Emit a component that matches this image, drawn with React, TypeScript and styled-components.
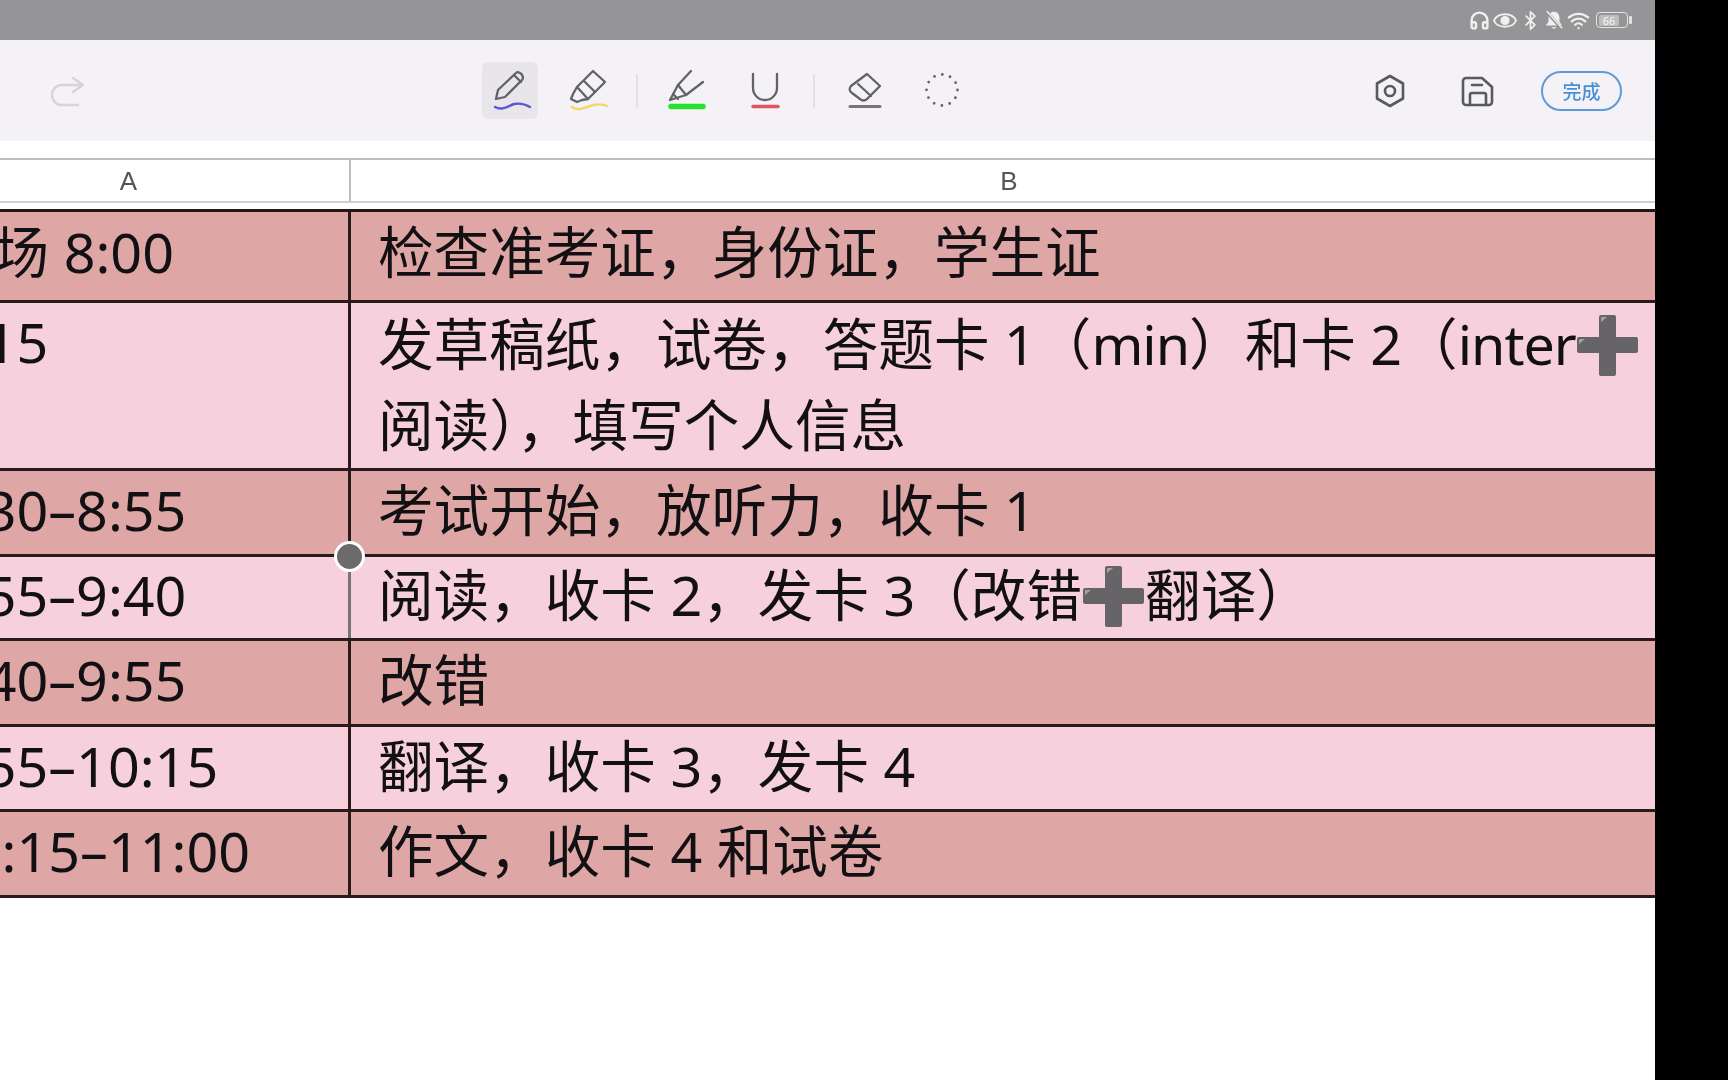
import React from 'react';
import styled, { createGlobalStyle } from 'styled-components';
import { Bluetooth, Headphones, Wifi } from 'lucide-react';

const GlobalStyle = createGlobalStyle`
  html, body {
    margin: 0;
    padding: 0;
    background: #000;
  }
  body {
    font-family: "Noto Sans", "Noto Sans CJK SC", sans-serif;
  }
`;

const PlusEmoji = () => (
  <PlusSvg viewBox="0 0 63 63">
    <path d="M25 1h13a2 2 0 0 1 2 2v20h20a2 2 0 0 1 2 2v12a2 2 0 0 1-2 2H40v21a2 2 0 0 1-2 2H25a2 2 0 0 1-2-2V39H3a2 2 0 0 1-2-2V25a2 2 0 0 1 2-2h20V3a2 2 0 0 1 2-2z" fill="#666466" />
    <path d="M25 8V4a1 1 0 0 1 1-1h5zM3 30v-4a1 1 0 0 1 1-1h5z" fill="#a5a3a5" />
  </PlusSvg>
);

const App = () => {
  const rows = [
    { time: '进场 8:00', text: <>检查准考证，身份证，学生证</> },
    {
      time: '8:15',
      text: (
        <>
          发草稿纸，试卷，答题卡 1（<Latin>min</Latin>）和卡 2（<Latin>inter</Latin><PlusEmoji />
          <br />
          阅读），填写个人信息
        </>
      ),
    },
    { time: '8:30–8:55', text: <>考试开始，放听力，收卡 1</> },
    { time: '8:55–9:40', text: <>阅读，收卡 2，发卡 3（改错<PlusEmoji />翻译）</> },
    { time: '9:40–9:55', text: <>改错</> },
    { time: '9:55–10:15', text: <>翻译，收卡 3，发卡 4</> },
    { time: '10:15–11:00', text: <>作文，收卡 4 和试卷</> },
  ];

  return (
    <Page>
      <GlobalStyle />
      <Screen>
        <StatusBar>
          <Headphones size={21} strokeWidth={2.8} />
          <EyeIcon viewBox="0 0 26 18">
            <path d="M1 9c4-9 20-9 24 0-4 9-20 9-24 0z" fill="none" stroke="#f1f0f1" strokeWidth="2" />
            <circle cx="13" cy="9" r="5" fill="#f1f0f1" />
          </EyeIcon>
          <Bluetooth size={21} strokeWidth={2} />
          <BellIcon viewBox="0 0 22 22">
            <path d="M11 2c-4 0-6 3-6 7v4l-3 4h18l-3-4V9c0-4-2-7-6-7zM8 19h6l-3 2z" fill="#f1f0f1" />
            <path d="M3 2l16 18" stroke="#949395" strokeWidth="3.5" />
            <path d="M3 1l17 19" stroke="#f1f0f1" strokeWidth="1.6" />
          </BellIcon>
          <Wifi size={23} strokeWidth={2.4} />
          <Battery>
            <BatteryLevel>66</BatteryLevel>
          </Battery>
        </StatusBar>

        <Toolbar>
          <RedoButton viewBox="0 0 36 36">
            <path d="M24 5l10 7-10 7M34 12H12C7 12 3 17 3 22s4 10 9 10h17" />
          </RedoButton>

          <Tools>
            <ToolButton $active>
              <ToolSvg viewBox="0 0 56 56">
                <path d="M14 37l2-9L34 11c3-3 9 3 6 7L23 35z" />
                <path d="M32 13l7 7" />
                <Stroke d="M13 45c7 4 13-1 19-3 6-1 11 0 16 3" stroke="#5a56d6" />
              </ToolSvg>
            </ToolButton>
            <ToolButton>
              <ToolSvg viewBox="0 0 56 56">
                <path d="M33 9l12 11-17 17-11-12z" />
                <path d="M24 19l11 11" />
                <path d="M17 25l-4 7-2 5 6 3 5-2 6-1" />
                <Stroke d="M12 45c7 5 14 0 21-2 5-1 10-1 14 1" stroke="#f2d868" />
              </ToolSvg>
            </ToolButton>
            <Separator />
            <ToolButton>
              <ToolSvg viewBox="0 0 56 56">
                <path d="M32 9L19 23l-8 15 16-5 17-13" />
                <path d="M19 23l8 10M14 32l5 5" />
                <Stroke d="M12 44.500h32" stroke="#28e02e" $width={5.5} />
              </ToolSvg>
            </ToolButton>
            <ToolButton>
              <ToolSvg viewBox="0 0 56 56">
                <path d="M16 12v14a12 12 0 0 0 24 0V12" />
                <Stroke d="M16 44.500h25" stroke="#e2545e" $width={3.5} />
              </ToolSvg>
            </ToolButton>
            <Separator />
            <ToolButton>
              <ToolSvg viewBox="0 0 56 56">
                <path d="M31 12l13 12-13 13c-2 2-5 2-7 0l-8-6c-3-2-3-5-1-7z" />
                <path d="M22 22l13 12" />
                <Stroke d="M14 44.500h30" stroke="#777579" $width={3} />
              </ToolSvg>
            </ToolButton>
            <ToolButton>
              <ToolSvg viewBox="0 0 56 56">
                <DottedCircle cx="28" cy="28" r="15.500" />
              </ToolSvg>
            </ToolButton>
          </Tools>

          <Actions>
            <IconButton viewBox="0 0 44 44">
              <path d="M22 7l13 7.500v15L22 37 9 29.500v-15z" />
              <circle cx="22" cy="22" r="5" />
            </IconButton>
            <IconButton viewBox="0 0 44 44">
              <path d="M10 9h16l10 9v15a3 3 0 0 1-3 3H10a3 3 0 0 1-3-3V12a3 3 0 0 1 3-3z" />
              <path d="M16 16h10M14 36V26a2 2 0 0 1 2-2h12a2 2 0 0 1 2 2v10" />
            </IconButton>
            <DoneButton>完成</DoneButton>
          </Actions>
        </Toolbar>

        <Sheet>
          <ColumnHeader>
            <HeaderCell>A</HeaderCell>
            <HeaderCell>B</HeaderCell>
          </ColumnHeader>

          <Table>
            {rows.map((row, i) => (
              <Row key={row.time} $dark={i % 2 === 0}>
                <TimeCell $lift={i === 0 ? 8 : i === 1 ? 0 : 5} $top={i === 1} $selected={i === 3}>
                  {row.time}
                  {i === 3 && <Handle />}
                </TimeCell>
                <TextCell $lift={i === 0 ? 8 : i === 1 ? 3 : 5} $wrapped={i === 1}>
                  <span>{row.text}</span>
                </TextCell>
              </Row>
            ))}
          </Table>
        </Sheet>
      </Screen>
    </Page>
  );
};

const Page = styled.div`
  display: flex;
  width: 1728px;
  height: 1080px;
  overflow: hidden;
  background: #000;
`;

const Screen = styled.div`
  width: 1655px;
  height: 1080px;
  flex-shrink: 0;
  overflow: hidden;
  background: #fff;
  filter: blur(0.5px);
`;

const StatusBar = styled.div`
  height: 40px;
  background: #959496;
  display: flex;
  align-items: center;
  justify-content: flex-end;
  gap: 3px;
  padding-right: 24px;
  color: #f1f0f1;
`;

const EyeIcon = styled.svg`
  width: 24px;
  height: 17px;
`;

const BellIcon = styled.svg`
  width: 20px;
  height: 20px;
`;

const Battery = styled.div`
  position: relative;
  width: 28px;
  height: 14px;
  margin-left: 3px;
  margin-right: 3px;
  border: 1.5px solid #e4e3e4;
  border-radius: 4px;
  display: flex;
  align-items: center;
  padding-left: 2px;
  &::after {
    content: '';
    position: absolute;
    right: -5px;
    top: 3px;
    width: 3px;
    height: 8px;
    background: #e4e3e4;
    border-radius: 1px;
  }
`;

const BatteryLevel = styled.span`
  width: 20px;
  height: 11px;
  background: #bdbcbe;
  border-radius: 2px;
  font-size: 11px;
  font-weight: 500;
  line-height: 11px;
  text-align: center;
  color: #f1f0f1;
`;

const Toolbar = styled.div`
  height: 101px;
  background: #f5f2f7;
  display: grid;
  grid-template-columns: 482px 1fr auto;
  align-items: center;
  padding-right: 33px;
`;

const RedoButton = styled.svg`
  width: 36px;
  height: 36px;
  margin-left: 49px;
  fill: none;
  stroke: #d6d4d8;
  stroke-width: 2.500;
  stroke-linecap: round;
  stroke-linejoin: round;
`;

const Tools = styled.div`
  display: flex;
  align-items: center;
  gap: 21.700px;
`;

const ToolButton = styled.div<{ $active?: boolean }>`
  width: 56px;
  height: 57px;
  border-radius: 6px;
  background: ${(p) => (p.$active ? '#e8e6ea' : 'transparent')};
`;

const ToolSvg = styled.svg`
  display: block;
  width: 56px;
  height: 56px;
  fill: none;
  stroke: #636266;
  stroke-width: 2.300;
  stroke-linecap: round;
  stroke-linejoin: round;
`;

const Stroke = styled.path<{ $width?: number }>`
  stroke-width: ${(p) => p.$width ?? 2.4};
`;

const DottedCircle = styled.circle`
  stroke-width: 2.800;
  stroke-dasharray: 0 8.100;
`;

const Separator = styled.div`
  width: 2px;
  height: 34px;
  margin: 0 -1px;
  background: #e3e1e5;
`;

const Actions = styled.div`
  display: flex;
  align-items: center;
  gap: 44px;
`;

const IconButton = styled.svg`
  width: 44px;
  height: 44px;
  fill: none;
  stroke: #5a595d;
  stroke-width: 2.600;
  stroke-linejoin: round;
  stroke-linecap: round;
`;

const DoneButton = styled.div`
  width: 77px;
  height: 36px;
  margin-left: -3px;
  border: 2px solid #5d9bd8;
  border-radius: 20px;
  display: flex;
  align-items: center;
  justify-content: center;
  font-family: "Noto Sans CJK SC", sans-serif;
  font-size: 19px;
  font-weight: 500;
  color: #4a8fd6;
`;

const Sheet = styled.div`
  margin-top: 17px;
  margin-left: -92px;
  width: 1759px;
`;

const ColumnHeader = styled.div`
  display: grid;
  grid-template-columns: 443px 1316px;
  height: 41px;
  border-top: 2px solid #bdbcbe;
  border-bottom: 2px solid #cfcfd0;
`;

const HeaderCell = styled.div`
  display: flex;
  align-items: center;
  justify-content: center;
  padding-top: 1px;
  font-family: "Liberation Sans", sans-serif;
  font-size: 26px;
  color: #555;
  &:first-child {
    border-right: 2px solid #bdbcbe;
  }
`;

const Table = styled.div`
  margin-top: 6px;
  border-top: 3px solid #231617;
  display: grid;
  grid-template-rows: 91px 168px 86px 84px 86px 85px 86px;
`;

const Row = styled.div<{ $dark: boolean }>`
  display: grid;
  grid-template-columns: 443px 1316px;
  min-height: 0;
  background: ${(p) => (p.$dark ? '#dfa6a6' : '#f6d0dd')};
  border-bottom: 3px solid #2b1a1c;
  font-size: 55.600px;
  color: #121012;
`;

const TimeCell = styled.div<{ $lift: number; $top?: boolean; $selected?: boolean }>`
  position: relative;
  display: flex;
  align-items: ${(p) => (p.$top ? 'flex-start' : 'center')};
  padding-left: 30px;
  padding-bottom: ${(p) => p.$lift}px;
  line-height: ${(p) => (p.$top ? '78px' : '72px')};
  white-space: nowrap;
  border-right: 3px solid ${(p) => (p.$selected ? '#777577' : '#2b1a1c')};
`;

const TextCell = styled.div<{ $lift: number; $wrapped?: boolean }>`
  display: flex;
  align-items: center;
  padding-left: 27px;
  padding-bottom: ${(p) => p.$lift}px;
  line-height: ${(p) => (p.$wrapped ? '81px' : '72px')};
  white-space: nowrap;
`;

const Latin = styled.span`
  letter-spacing: -1px;
`;

const PlusSvg = styled.svg`
  display: inline-block;
  width: 63px;
  height: 63px;
  vertical-align: -12px;
`;

const Handle = styled.div`
  position: absolute;
  right: -17px;
  top: -16px;
  width: 25px;
  height: 25px;
  border: 3px solid #fff;
  border-radius: 50%;
  background: #6c6a6c;
`;

export default App;
